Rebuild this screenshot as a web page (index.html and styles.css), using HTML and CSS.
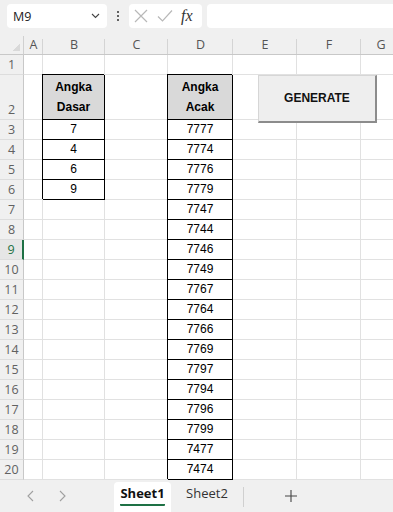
FILE: index.html
```html
<!DOCTYPE html>
<html lang="en">
<head>
    <meta charset="UTF-8">
    <title>Angka Acak</title>
    <link rel="stylesheet" href="styles.css">
</head>
<body>

<div class="app">
    <div class="toolbar">
        <div class="name-box">
            <span>M9</span>
            <svg class="chevron" width="9" height="6" viewBox="0 0 9 6"><path d="M1 1l3.5 3.5L8 1" fill="none" stroke="#444" stroke-width="1.1"/></svg>
        </div>
        <div class="dots"><i></i><i></i><i></i></div>
        <div class="fx-box">
            <svg width="14" height="14" viewBox="0 0 14 14"><path d="M1 1l12 12M13 1L1 13" stroke="#b8b8b8" stroke-width="1.2"/></svg>
            <svg width="16" height="14" viewBox="0 0 16 14"><path d="M1 7.5l4.5 4.5L15 1.5" fill="none" stroke="#b8b8b8" stroke-width="1.2"/></svg>
            <span class="fx">fx</span>
        </div>
        <div class="formula-box"></div>
    </div>

    <div class="sheet">
        <div class="grid" id="grid"></div>
        <button class="gen-button">GENERATE</button>
    </div>

    <div class="tabs">
        <div class="tab-nav">
            <span><svg width="7" height="12" viewBox="0 0 7 12"><path d="M6 1L1 6l5 5" fill="none" stroke="#a0a0a0" stroke-width="1.1"/></svg></span>
            <span><svg width="7" height="12" viewBox="0 0 7 12"><path d="M1 1l5 5-5 5" fill="none" stroke="#a0a0a0" stroke-width="1.1"/></svg></span>
        </div>
        <div class="tab active"><span>Sheet1</span></div>
        <div class="tab"><span>Sheet2</span></div>
        <div class="tab-sep"></div>
        <div class="tab-add">
            <svg width="12" height="12" viewBox="0 0 12 12"><path d="M6 0v12M0 6h12" stroke="#444" stroke-width="1.1"/></svg>
        </div>
    </div>
</div>

<script>
    const columns = ["", "A", "B", "C", "D", "E", "F", "G"];
    const dasar = [7, 4, 6, 9];
    const acak = [7777, 7774, 7776, 7779, 7747, 7744, 7746, 7749, 7767, 7764,
        7766, 7769, 7797, 7794, 7796, 7799, 7477, 7474];

    function addCell(grid, cls, text) {
        let cell = document.createElement("div");
        cell.className = cls;
        cell.textContent = text;
        grid.appendChild(cell);
    }

    function buildGrid() {
        const grid = document.getElementById("grid");

        //column header row
        columns.forEach((name, i) => {
            addCell(grid, i === 0 ? "corner" : "col-head", name);
        });

        for (let row = 1; row <= 20; row++) {
            addCell(grid, row === 9 ? "row-head selected" : "row-head", row);

            for (let col = 1; col < columns.length; col++) {
                let cls = "cell";
                let text = "";

                if (col === 2 && row >= 2 && row <= 6) {
                    cls += " boxed";
                    if (row === 2) {
                        cls += " head";
                        text = "Angka Dasar";
                    } else {
                        text = dasar[row - 3];
                    }
                }
                if (col === 4 && row >= 2) {
                    cls += " boxed";
                    if (row === 2) {
                        cls += " head";
                        text = "Angka Acak";
                    } else {
                        text = acak[row - 3];
                    }
                }
                addCell(grid, cls, text);
            }
        }
    }

    buildGrid();
</script>

</body>
</html>
```

FILE: styles.css
```css
* {
    box-sizing: border-box;
}

body {
    margin: 0;
    font-family: "Open Sans", "Noto Sans", sans-serif;
    background: #f0f0f0;
}

.app {
    width: 393px;
    height: 512px;
    display: flex;
    flex-direction: column;
    overflow: hidden;
}

/* Formula bar */
.toolbar {
    height: 36px;
    flex: none;
    display: flex;
    align-items: flex-start;
    padding: 4px 0 0 7px;
    background: #f0f0f0;
}

.name-box {
    width: 100px;
    height: 24px;
    background: #fff;
    border-radius: 4px;
    display: flex;
    align-items: center;
    justify-content: space-between;
    padding: 0 7px 0 6px;
    font-size: 12.5px;
    color: #222;
}

.dots {
    width: 22px;
    height: 24px;
    display: flex;
    flex-direction: column;
    align-items: center;
    justify-content: center;
    gap: 2px;
}

.dots i {
    width: 2px;
    height: 2px;
    background: #333;
    border-radius: 1px;
}

.fx-box {
    width: 73px;
    height: 24px;
    background: #fff;
    border-radius: 4px;
    display: flex;
    align-items: center;
    gap: 9px;
    padding-left: 5px;
}

.fx {
    font-family: "Liberation Serif", serif;
    font-style: italic;
    font-size: 16px;
    color: #333;
    margin-left: -1px;
}

.formula-box {
    flex: 1;
    height: 24px;
    margin-left: 5px;
    margin-right: -10px;
    background: #fff;
    border-radius: 4px;
}

/* Worksheet */
.sheet {
    position: relative;
    flex: 1;
    overflow: hidden;
    background: #fff;
}

.grid {
    display: grid;
    grid-template-columns: 24px 19px 62px 63px 65px 64px 64px 40px;
    grid-template-rows: 19px 20px 45px;
    grid-auto-rows: 20px;
}

.corner {
    background: #f0f0f0 linear-gradient(135deg, transparent 62%, #d9d9d9 62%) no-repeat 10px 5px / 10px 10px;
    border-right: 1px solid #d0d0d0;
    border-bottom: 1px solid #c8c8c8;
}

.col-head {
    background: #f0f0f0 linear-gradient(#d4d4d4, #d4d4d4) no-repeat right 3px / 1px 100%;
    border-bottom: 1px solid #c8c8c8;
    font-size: 12.5px;
    color: #555;
    text-align: center;
    line-height: 18px;
}

.row-head {
    background: #f0f0f0;
    border-right: 1px solid #c8c8c8;
    border-bottom: 1px solid #dddddd;
    display: flex;
    align-items: flex-end;
    justify-content: center;
    font-size: 12.5px;
    line-height: 19px;
    color: #616161;
}

.row-head.selected {
    background: #e6e6e6;
    border-right: 2px solid #1e7145;
    color: #1e7145;
}

.cell {
    border-right: 1px solid #e1e1e1;
    border-bottom: 1px solid #e1e1e1;
    display: flex;
    align-items: flex-end;
    justify-content: center;
    text-align: center;
    font-family: "Liberation Sans", Arial, sans-serif;
    font-size: 12px;
    line-height: 19px;
    color: #000;
}

.cell.boxed {
    border-right-color: #000;
    border-bottom-color: #000;
    box-shadow: -1px -1px 0 #000;
}

.cell.head {
    background: #d9d9d9;
    font-weight: bold;
    line-height: 20px;
    padding: 0 14px 2px;
}

.gen-button {
    position: absolute;
    left: 258px;
    top: 39px;
    width: 119px;
    height: 48px;
    background: #eeeeee;
    border: 1px solid #d6d6d6;
    border-right: 2px solid #8c8c8c;
    border-bottom: 2px solid #8c8c8c;
    font-family: "Liberation Sans", Arial, sans-serif;
    font-size: 12px;
    font-weight: bold;
    color: #111;
    padding: 0 0 2px;
}

/* Sheet tabs */
.tabs {
    height: 32px;
    flex: none;
    display: flex;
    align-items: stretch;
    background: #f0f0f0;
    padding-top: 2px;
}

.tab-nav {
    width: 114px;
    display: flex;
    padding-left: 14px;
}

.tab-nav span {
    width: 32px;
    display: flex;
    align-items: center;
    justify-content: center;
    padding-bottom: 2px;
}

.tab {
    width: 72px;
    display: flex;
    justify-content: center;
    padding-top: 2px;
    font-size: 13px;
    color: #333;
}

.tab.active {
    width: 57px;
    background: #fff;
    border-radius: 4px 4px 0 0;
    font-weight: bold;
    color: #111;
}

.tab.active span {
    height: 22px;
    border-bottom: 2px solid #1e7145;
    border-radius: 0 0 1px 1px;
}

.tab-sep {
    width: 1px;
    margin: 5px 0 5px;
    background: #d0d0d0;
}

.tab-add {
    width: 94px;
    display: flex;
    align-items: center;
    justify-content: center;
    padding-bottom: 2px;
}
```
